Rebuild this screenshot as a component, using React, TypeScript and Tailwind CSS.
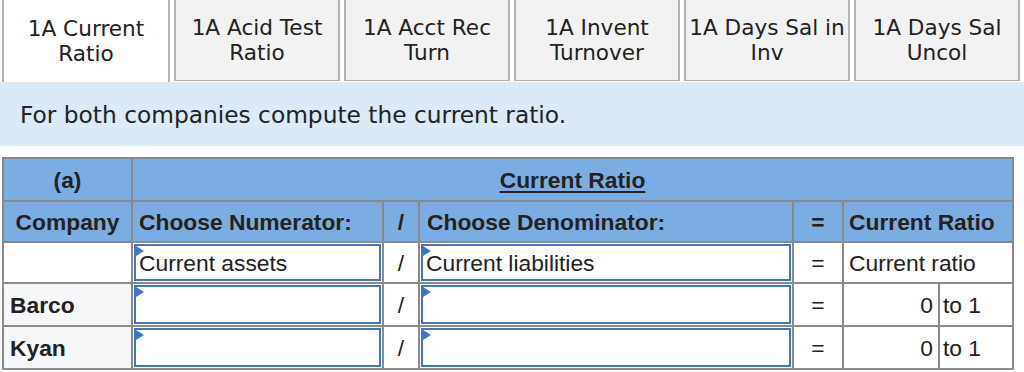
import React from 'react';

const tabs = [
  ['1A Current', 'Ratio'],
  ['1A Acid Test', 'Ratio'],
  ['1A Acct Rec', 'Turn'],
  ['1A Invent', 'Turnover'],
  ['1A Days Sal in', 'Inv'],
  ['1A Days Sal', 'Uncol'],
];

function Picker({ value }: { value?: string }) {
  return (
    <div className="relative h-full border-2 border-[#4676b6] bg-white flex items-center pl-[3px] text-[#222]">
      <span className="absolute left-0 top-0 w-0 h-0 border-y-[5px] border-y-transparent border-l-[8px] border-l-[#3a78c8]" />
      {value}
    </div>
  );
}

export default function App() {
  const cell = 'border-2 border-[#8a8a8a]';
  return (
    <div className="w-[1024px] h-[372px] bg-white overflow-hidden">
      {/* tabs */}
      <div className="flex gap-[4px] pl-[2px] h-[82px] items-start font-['DejaVu_Sans',sans-serif] text-[21.6px] leading-[25px] text-[#222]">
        {tabs.map((t, i) => (
          <div
            key={i}
            className={
              i === 0
                ? 'w-[168px] h-[82px] bg-white border-x-2 border-[#b3b3b3] flex flex-col items-center justify-center pb-[1px]'
                : 'w-[166px] h-[81px] bg-[#f2f2f2] border-x-2 border-b border-[#b3b3b3] flex flex-col items-center justify-center'
            }
          >
            <span>{t[0]}</span>
            <span>{t[1]}</span>
          </div>
        ))}
      </div>

      {/* instructions */}
      <div className="h-[64px] bg-[#dceaf7] flex items-center pl-[20px] pt-[3px] font-['DejaVu_Sans',sans-serif] text-[23.3px] text-[#222]">
        For both companies compute the current ratio.
      </div>

      {/* table */}
      <div className="pt-[11px] pl-[2px]">
        <table className="table-fixed border-collapse w-[1010px] font-['Liberation_Sans',Arial,sans-serif] text-[22.8px] leading-[26px] text-[#222]">
          <colgroup>
            <col className="w-[129px]" />
            <col className="w-[251px]" />
            <col className="w-[36px]" />
            <col className="w-[374px]" />
            <col className="w-[50px]" />
            <col className="w-[96px]" />
            <col className="w-[74px]" />
          </colgroup>
          <tbody>
            <tr className="h-[43px] bg-[#7aade2] font-bold">
              <td className={`${cell} text-center`}>(a)</td>
              <td colSpan={6} className={`${cell} text-center`}>
                <span className="underline underline-offset-[3px]">Current Ratio</span>
              </td>
            </tr>
            <tr className="h-[41px] bg-[#7aade2] font-bold">
              <td className={`${cell} text-center`}>Company</td>
              <td className={`${cell} px-[6px]`}>Choose Numerator:</td>
              <td className={`${cell} text-center`}>/</td>
              <td className={`${cell} px-[7px]`}>Choose Denominator:</td>
              <td className={`${cell} text-center`}>=</td>
              <td colSpan={2} className={`${cell} px-[5px]`}>Current Ratio</td>
            </tr>
            <tr className="h-[41px]">
              <td className={`${cell} bg-white`} />
              <td className={`${cell} p-[1px] h-[41px]`}>
                <Picker value="Current assets" />
              </td>
              <td className={`${cell} text-center`}>/</td>
              <td className={`${cell} p-[1px] h-[41px]`}>
                <Picker value="Current liabilities" />
              </td>
              <td className={`${cell} text-center`}>=</td>
              <td colSpan={2} className={`${cell} px-[5px]`}>Current ratio</td>
            </tr>
            {['Barco', 'Kyan'].map((name) => (
              <tr key={name} className="h-[43px]">
                <td className={`${cell} bg-[#f6f7f9] font-bold px-[6px]`}>{name}</td>
                <td className={`${cell} p-[1px] h-[43px]`}>
                  <Picker />
                </td>
                <td className={`${cell} text-center`}>/</td>
                <td className={`${cell} p-[1px] h-[43px]`}>
                  <Picker />
                </td>
                <td className={`${cell} text-center`}>=</td>
                <td className={`${cell} text-right pr-[5px]`}>0</td>
                <td className={`${cell} pl-[3px]`}>to 1</td>
              </tr>
            ))}
          </tbody>
        </table>
      </div>
    </div>
  );
}
